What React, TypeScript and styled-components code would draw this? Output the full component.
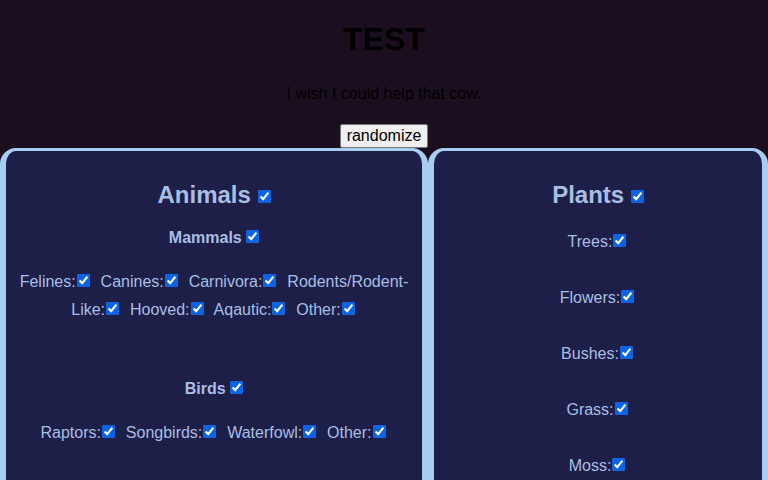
import React, { useState } from 'react'
import styled, { createGlobalStyle } from 'styled-components'

const GlobalStyle = createGlobalStyle`
    html, body {
        margin: 0;
        padding: 0;
        background: #1b0f1f;
        font-family: "Liberation Sans", Arial, sans-serif;
    }
`

const Page = styled.div`
    min-height: 100vh;
    background: #1b0f1f;
    text-align: center;
`

const Header = styled.header`
    display: flex;
    flex-direction: column;
    align-items: center;
    padding-top: 21px;
`

const Title = styled.h1`
    margin: 0;
    font-size: 32px;
    font-weight: bold;
    color: #000;
`

const Quote = styled.p`
    margin: 27px 0 21px;
    font-size: 16px;
    color: #000;
`

const RandomButton = styled.button`
    font-family: inherit;
    font-size: 16px;
    padding: 1px 6px;
    height: 24px;
    color: #000;
    background: #efefef;
    border: 1px solid #767676;
    border-radius: 2px;
    cursor: pointer;
`

const Panels = styled.main`
    display: grid;
    grid-template-columns: 428fr 340fr;
    align-items: start;
`

const Panel = styled.section`
    min-height: 400px;
    padding-top: 10px;
    background: #1e1f48;
    border: solid #a8cdf0;
    border-width: 3px 6px;
    border-radius: 16px;
    color: #a8bee4;
`

const PanelTitle = styled.h2`
    margin: 20px 0 0;
    font-size: 24px;
    font-weight: bold;
    line-height: 27.6px;
`

const Group = styled.div`
    margin-top: 20px;
    margin-bottom: 56px;
`

const GroupTitle = styled.h4`
    margin: 0;
    font-size: 16px;
    font-weight: bold;
    line-height: 18px;
`

const Row = styled.div`
    margin-top: 21px;
    padding: 0 10px;
    font-size: 16px;
    line-height: 28px;
`

const Item = styled.label`
    cursor: pointer;
`

const Stack = styled.div`
    margin-top: 19px;
    font-size: 16px;
    line-height: 28px;
`

const StackItem = styled.div`
    margin-bottom: 28px;
`

const Box = styled.input.attrs({ type: 'checkbox' })<{ $heading?: boolean }>`
    margin: ${props => props.$heading ? '0' : '0 2px 0 1px'};
    accent-color: #0b63e6;
    vertical-align: baseline;
`

const groups = [
    { name: 'Mammals', items: ['Felines', 'Canines', 'Carnivora', 'Rodents/Rodent-Like', 'Hooved', 'Aqautic', 'Other'] },
    { name: 'Birds', items: ['Raptors', 'Songbirds', 'Waterfowl', 'Other'] },
]

const plants = ['Trees', 'Flowers', 'Bushes', 'Grass', 'Moss']

const App = () => {
    const [checked, setChecked] = useState<Record<string, boolean>>({})
    const isOn = (key: string) => checked[key] !== false
    const toggle = (key: string) => setChecked({ ...checked, [key]: !isOn(key) })

    return (
        <Page>
            <GlobalStyle />
            <Header>
                <Title>TEST</Title>
                <Quote>I wish I could help that cow.</Quote>
                <RandomButton>randomize</RandomButton>
            </Header>
            <Panels>
                <Panel>
                    <PanelTitle>
                        Animals <Box $heading checked={isOn('animals')} onChange={() => toggle('animals')} />
                    </PanelTitle>
                    {groups.map(group => (
                        <Group key={group.name}>
                            <GroupTitle>
                                {group.name} <Box $heading checked={isOn(group.name)} onChange={() => toggle(group.name)} />
                            </GroupTitle>
                            <Row>
                                {group.items.map((item, i) => (
                                    <React.Fragment key={item}>
                                        <Item>
                                            {item}:<Box checked={isOn(group.name + item)} onChange={() => toggle(group.name + item)} />
                                        </Item>
                                        {i < group.items.length - 1 ? '\u00a0 ' : null}
                                    </React.Fragment>
                                ))}
                            </Row>
                        </Group>
                    ))}
                </Panel>
                <Panel>
                    <PanelTitle>
                        Plants <Box $heading checked={isOn('plants')} onChange={() => toggle('plants')} />
                    </PanelTitle>
                    <Stack>
                        {plants.map(plant => (
                            <StackItem key={plant}>
                                <Item>
                                    {plant}:<Box checked={isOn(plant)} onChange={() => toggle(plant)} />
                                </Item>
                            </StackItem>
                        ))}
                    </Stack>
                </Panel>
            </Panels>
        </Page>
    )
}

export default App
